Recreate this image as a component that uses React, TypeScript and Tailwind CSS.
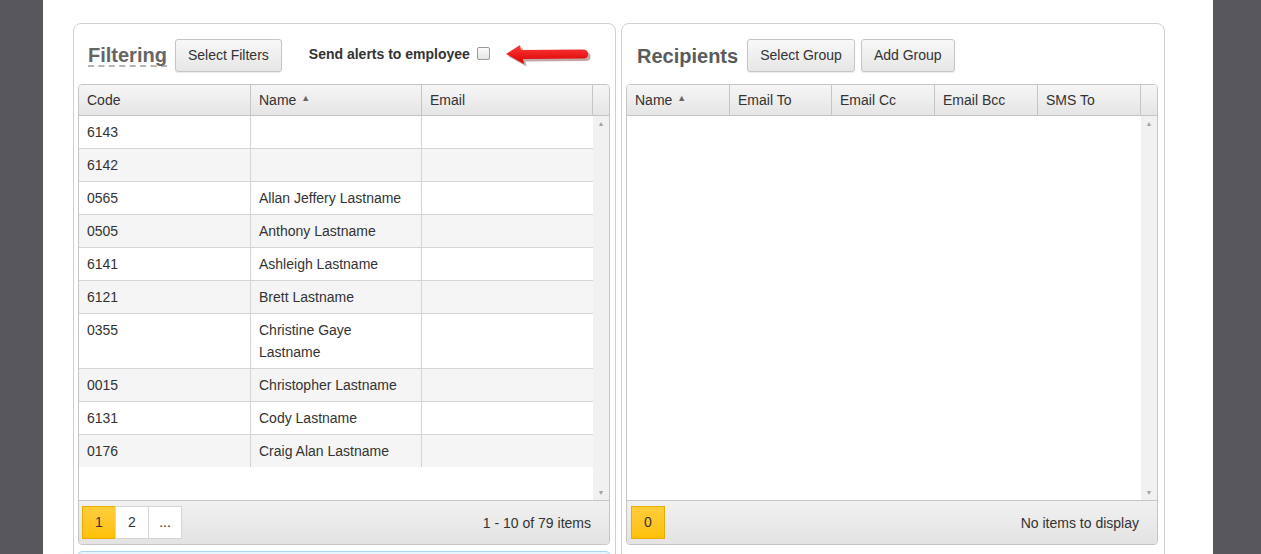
import React from "react";

const font = { fontFamily: '"Liberation Sans", Arial, sans-serif' };

type Row = { code: string; name: string; email?: string };

const rows: Row[] = [
  { code: "6143", name: "" },
  { code: "6142", name: "" },
  { code: "0565", name: "Allan Jeffery Lastname" },
  { code: "0505", name: "Anthony Lastname" },
  { code: "6141", name: "Ashleigh Lastname" },
  { code: "6121", name: "Brett Lastname" },
  { code: "0355", name: "Christine Gaye Lastname" },
  { code: "0015", name: "Christopher Lastname" },
  { code: "6131", name: "Cody Lastname" },
  { code: "0176", name: "Craig Alan Lastname" },
];

function Btn({ children }: { children: React.ReactNode }) {
  return (
    <button className="h-[33px] px-[12px] rounded-[3px] border border-[#c5c5c5] bg-gradient-to-b from-[#f8f8f8] to-[#e6e6e6] text-[14px] text-[#333] shadow-[0_1px_1px_rgba(0,0,0,0.08)]">
      {children}
    </button>
  );
}

function Sort() {
  return <span className="ml-[5px] text-[9px] text-[#666] relative top-[-1px]">▲</span>;
}

function HeadCell({ w, children }: { w: string; children: React.ReactNode }) {
  return (
    <div className={`${w} h-full flex items-center px-2 border-r border-[#c5c5c5] text-[14px] text-[#333]`}>
      {children}
    </div>
  );
}

function Scrollbar() {
  return (
    <div className="flex-1 h-full bg-[#f1f1f1] flex flex-col items-center justify-between py-[4px]">
      <span className="text-[7px] text-[#a3a3a3] leading-none">▲</span>
      <span className="text-[7px] text-[#a3a3a3] leading-none">▼</span>
    </div>
  );
}

function PageBtn({ children, active }: { children: React.ReactNode; active?: boolean }) {
  return (
    <div
      className={`w-[34px] h-[33px] flex items-center justify-center text-[14px] border ${
        active
          ? "bg-gradient-to-b from-[#ffcd3a] to-[#ffc000] border-[#e8ab00] text-[#333]"
          : "bg-white border-[#d5d5d5] text-[#333] -ml-px"
      }`}
    >
      {children}
    </div>
  );
}

function Arrow() {
  return (
    <svg width="90" height="26" viewBox="0 0 90 26" className="ml-[15px]">
      <defs>
        <linearGradient id="rg" x1="0" y1="0" x2="0" y2="1">
          <stop offset="0" stopColor="#ff3b3b" />
          <stop offset="1" stopColor="#d80000" />
        </linearGradient>
      </defs>
      <path
        d="M2,12 L16,3 L17,8 L79,7.5 Q84,7.5 84,12 Q84,16.5 79,16.5 L19,17 L20,22 Z"
        fill="#5a0000"
        opacity="0.35"
        transform="translate(1.5,1.5)"
      />
      <path d="M1,11 L15,2 L16,7 L78,6.5 Q83,6.5 83,11 Q83,15.5 78,15.5 L18,16 L19,21 Z" fill="url(#rg)" />
    </svg>
  );
}

export default function App() {
  return (
    <div className="w-[1261px] h-[554px] bg-[#58585c] overflow-hidden" style={font}>
      <div className="ml-[43px] w-[1170px] h-[554px] bg-white overflow-hidden pt-[23px] pl-[30px]">
        <div className="flex gap-[5px]">
          {/* left card */}
          <div className="w-[543px] h-[620px] border border-[#d0d0d0] rounded-[8px] px-[4px]">
            <div className="h-[60px] pt-[3px] flex items-center">
              <span className="ml-[10px] text-[20px] font-bold text-[#666] border-b-2 border-dashed border-[#b5b5b5] leading-[20px]">
                Filtering
              </span>
              <div className="ml-[8px]">
                <Btn>Select Filters</Btn>
              </div>
              <span className="ml-[27px] text-[14px] font-bold text-[#333] relative top-[-1px]">Send alerts to employee</span>
              <span className="ml-[7px] w-[13px] h-[13px] border border-[#9a9a9a] rounded-[2px] bg-gradient-to-b from-[#fcfcfc] to-[#e4e4e4] relative top-[-2px]" />
              <Arrow />
            </div>

            <div className="w-[532px] border border-[#c5c5c5] rounded-[4px] overflow-hidden">
              <div className="h-[31px] flex border-b border-[#c5c5c5] bg-gradient-to-b from-[#f6f6f6] to-[#e5e5e5]">
                <HeadCell w="w-[172px]">Code</HeadCell>
                <HeadCell w="w-[171px]">
                  Name
                  <Sort />
                </HeadCell>
                <HeadCell w="w-[171px]">Email</HeadCell>
                <div className="flex-1" />
              </div>
              <div className="h-[384px] flex">
                <div className="w-[514px]">
                  {rows.map((r, i) => (
                    <div
                      key={r.code}
                      className={`flex text-[14px] text-[#333] leading-[22px] ${
                        i % 2 === 1 ? "bg-[#f5f5f5]" : "bg-white"
                      } ${i < rows.length - 1 ? "border-b border-[#d5d5d5]" : ""}`}
                    >
                      <div className="w-[172px] px-2 py-[5px] border-r border-[#d5d5d5]">{r.code}</div>
                      <div className="w-[171px] px-2 py-[5px] border-r border-[#d5d5d5]">{r.name}</div>
                      <div className="w-[171px] px-2 py-[5px]">{r.email}</div>
                    </div>
                  ))}
                </div>
                <Scrollbar />
              </div>
              <div className="h-[44px] border-t border-[#c5c5c5] bg-gradient-to-b from-[#f1f1f1] to-[#e3e3e3] flex items-start pt-[5px] pl-[3px] pr-[18px]">
                <PageBtn active>1</PageBtn>
                <PageBtn>2</PageBtn>
                <PageBtn>...</PageBtn>
                <span className="ml-auto mt-[7px] text-[14px] text-[#333]">1 - 10 of 79 items</span>
              </div>
            </div>

            <div className="mt-[6px] w-[532px] h-[40px] border border-[#a8d9f1] bg-[#e6f6fd] rounded-[4px]" />
          </div>

          {/* right card */}
          <div className="w-[544px] h-[620px] border border-[#d0d0d0] rounded-[8px] pl-[4px]">
            <div className="h-[60px] pt-[3px] flex items-center">
              <span className="ml-[11px] text-[20px] font-bold text-[#5b5b5b]">Recipients</span>
              <div className="ml-[9px] flex gap-[6px]">
                <Btn>Select Group</Btn>
                <Btn>Add Group</Btn>
              </div>
            </div>

            <div className="w-[532px] border border-[#c5c5c5] rounded-[4px] overflow-hidden">
              <div className="h-[31px] flex border-b border-[#c5c5c5] bg-gradient-to-b from-[#f6f6f6] to-[#e5e5e5]">
                <HeadCell w="w-[103px]">
                  Name
                  <Sort />
                </HeadCell>
                <HeadCell w="w-[102px]">Email To</HeadCell>
                <HeadCell w="w-[103px]">Email Cc</HeadCell>
                <HeadCell w="w-[103px]">Email Bcc</HeadCell>
                <HeadCell w="w-[103px]">SMS To</HeadCell>
                <div className="flex-1" />
              </div>
              <div className="h-[384px] flex">
                <div className="w-[514px] bg-white" />
                <Scrollbar />
              </div>
              <div className="h-[44px] border-t border-[#c5c5c5] bg-gradient-to-b from-[#f1f1f1] to-[#e3e3e3] flex items-start pt-[5px] pl-[4px] pr-[18px]">
                <PageBtn active>0</PageBtn>
                <span className="ml-auto mt-[7px] text-[14px] text-[#333]">No items to display</span>
              </div>
            </div>
          </div>
        </div>
      </div>
    </div>
  );
}
